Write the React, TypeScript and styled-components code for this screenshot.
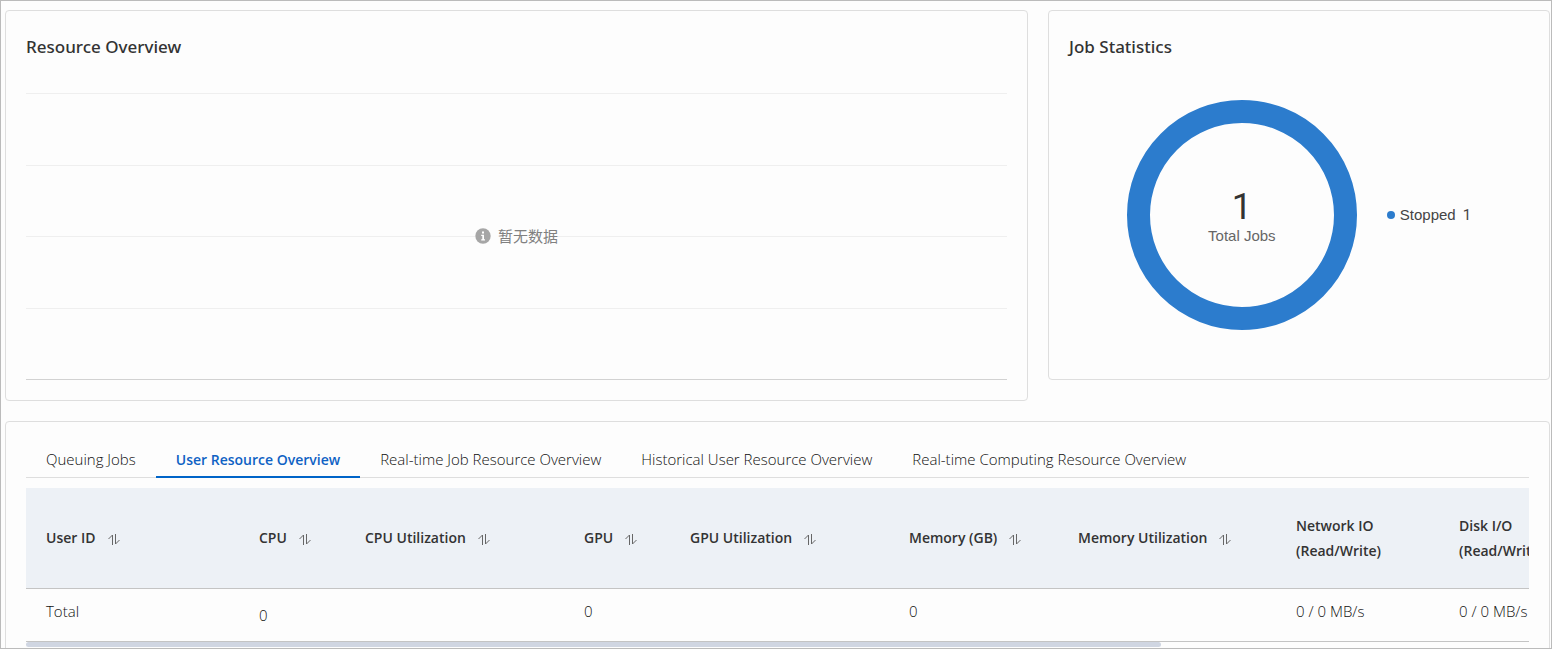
import React, { useRef, useState } from "react";
import styled, { createGlobalStyle } from "styled-components";

const GlobalStyle = createGlobalStyle`
  *, *::before, *::after { box-sizing: border-box; }
  body {
    margin: 0;
    background: #fdfdfd;
    color: #333;
    font-family: "Open Sans", "Noto Sans CJK SC", sans-serif;
    font-size: 15px;
  }
`;

const Page = styled.main`
  height: 100vh;
  overflow: hidden;
  border: 1px solid #bbb;
  padding: 9px 1px 0 4px;
`;

const TopRow = styled.div`
  display: grid;
  grid-template-columns: minmax(0, 1023fr) minmax(0, 502fr);
  gap: 20px;
  align-items: start;
  margin-bottom: 20px;
`;

const Card = styled.section`
  border: 1px solid #dedede;
  border-radius: 4px;
  padding: 20px;
`;

const CardTitle = styled.h2`
  margin: 0;
  font-family: "Noto Sans", sans-serif;
  font-size: 17px;
  font-weight: 500;
  line-height: 32px;
`;

const Plot = styled.div`
  position: relative;
  display: flex;
  flex-direction: column;
  justify-content: space-between;
  height: 287px;
  margin-top: 30px;
`;

const GridLine = styled.div<{ $axis?: boolean }>`
  height: 1px;
  background: ${(p) => (p.$axis ? "#d2d2d2" : "#efefef")};
`;

const EmptyOverlay = styled.div`
  position: absolute;
  inset: 0;
  display: flex;
  align-items: center;
  justify-content: center;
  padding-bottom: 2px;
`;

const EmptyMessage = styled.p`
  display: flex;
  align-items: center;
  gap: 7px;
  margin: 0;
  background: #fdfdfd;
  color: #808080;
  font: 15px/20px "Noto Sans CJK SC", sans-serif;
`;

const ChartArea = styled.div`
  display: flex;
  align-items: center;
  justify-content: center;
  gap: 30px;
  padding: 37px 0 29px;
  font-family: "Liberation Sans", Arial, sans-serif;
  font-size: 15px;
`;

const DonutBox = styled.div`
  display: grid;
  place-items: center;
  > * { grid-area: 1 / 1; }
`;

const DonutLabel = styled.div`
  display: flex;
  flex-direction: column;
  align-items: center;
  padding-top: 4px;
  color: #666;
  line-height: 20px;
`;

const DonutValue = styled.strong`
  color: #333;
  font-family: Roboto, sans-serif;
  font-size: 36px;
  font-weight: 400;
  line-height: 38px;
`;

const Legend = styled.div`
  display: flex;
  align-items: center;
  gap: 5px;
  color: #444;
  line-height: 20px;
`;

const LegendDot = styled.span`
  width: 8px;
  height: 8px;
  border-radius: 50%;
  background: #2c7ccd;
`;

const LegendValue = styled.span`
  padding-left: 2px;
  font-family: Roboto, sans-serif;
`;

const Tabs = styled.div`
  display: flex;
  height: 36px;
  margin-bottom: 10px;
  box-shadow: inset 0 -1px #dedede;
`;

const Tab = styled.button<{ $active: boolean }>`
  padding: 0 20px;
  border: 0;
  border-bottom: 2px solid ${(p) => (p.$active ? "#0064c8" : "transparent")};
  background: none;
  color: ${(p) => (p.$active ? "#0f62c4" : "#111")};
  font: inherit;
  font-size: ${(p) => (p.$active ? 14 : 15)}px;
  font-weight: ${(p) => (p.$active ? 600 : 300)};
  white-space: nowrap;
  cursor: pointer;
`;

const TableViewport = styled.div`
  overflow-x: auto;
  scrollbar-width: none;
`;

const Table = styled.table`
  width: 1990px;
  table-layout: fixed;
  border-collapse: separate;
  border-spacing: 0;
`;

const Col = styled.col<{ $width?: number }>`
  width: ${(p) => (p.$width ? `${p.$width}px` : "auto")};
`;

const HeadCell = styled.th`
  height: 101px;
  padding: 0 20px;
  border-bottom: 1px solid #c4c4c4;
  background: #edf1f6;
  font-size: 14px;
  font-weight: 600;
  line-height: 25px;
  text-align: left;
  white-space: pre-line;
`;

const HeadLabel = styled.div`
  display: flex;
  align-items: center;
  gap: 12px;
  padding-bottom: 2px;
`;

const SortButton = styled.button`
  display: flex;
  padding: 4px 0 0;
  border: 0;
  background: none;
  color: #666;
  cursor: pointer;
`;

const Cell = styled.td<{ $middle?: boolean }>`
  height: 53px;
  padding: 10px 20px;
  border-bottom: 1px solid #c4c4c4;
  color: #111;
  font-weight: 300;
  line-height: 24px;
  vertical-align: ${(p) => (p.$middle ? "middle" : "top")};
`;

const ScrollThumb = styled.div`
  height: 5px;
  border-radius: 3px;
  background: #d0d6e2;
`;

const SortIcon = () => (
  <svg width="12" height="11" viewBox="0 0 12 11" fill="none" stroke="currentColor" aria-hidden="true">
    <path d="M4.5 11V1L0.5 5" />
    <path d="M7.5 0V10L11.5 6" />
  </svg>
);

const InfoIcon = () => (
  <svg width="16" height="16" viewBox="0 0 16 16" aria-hidden="true">
    <circle cx="8" cy="8" r="7.7" fill="#a6a6a6" />
    <path d="M7 3.5h2v2H7zM6.2 6.8H9v4.4h1v1.2H6.2v-1.2h1.1V8H6.2z" fill="#fff" />
  </svg>
);

const tabs = [
  "Queuing Jobs",
  "User Resource Overview",
  "Real-time Job Resource Overview",
  "Historical User Resource Overview",
  "Real-time Computing Resource Overview",
];

type Column = { title: string; width?: number; sortable?: boolean; total: string; middle?: boolean };

const columns: Column[] = [
  { title: "User ID", width: 213, sortable: true, total: "Total" },
  { title: "CPU", width: 106, sortable: true, total: "0", middle: true },
  { title: "CPU Utilization", width: 219, sortable: true, total: "" },
  { title: "GPU", width: 106, sortable: true, total: "0" },
  { title: "GPU Utilization", width: 219, sortable: true, total: "" },
  { title: "Memory (GB)", width: 169, sortable: true, total: "0" },
  { title: "Memory Utilization", width: 218, sortable: true, total: "" },
  { title: "Network IO\n(Read/Write)", width: 163, total: "0 / 0 MB/s" },
  { title: "Disk I/O\n(Read/Write)", total: "0 / 0 MB/s" },
];

const TABLE_WIDTH = 1990;

export default function App() {
  const [active, setActive] = useState(1);
  const [scroll, setScroll] = useState({ left: 0, ratio: 1135 / 1503 });
  const viewport = useRef<HTMLDivElement>(null);

  const onScroll = () => {
    const el = viewport.current;
    if (el) setScroll({ left: el.scrollLeft / TABLE_WIDTH, ratio: el.clientWidth / TABLE_WIDTH });
  };

  return (
    <>
      <GlobalStyle />
      <Page>
        <TopRow>
          <Card>
            <CardTitle>Resource Overview</CardTitle>
            <Plot>
              <GridLine />
              <GridLine />
              <GridLine />
              <GridLine />
              <GridLine $axis />
              <EmptyOverlay>
                <EmptyMessage>
                  <InfoIcon />
                  <span>暂无数据</span>
                </EmptyMessage>
              </EmptyOverlay>
            </Plot>
          </Card>
          <Card>
            <CardTitle>Job Statistics</CardTitle>
            <ChartArea>
              <DonutBox>
                <svg width="230" height="230" viewBox="0 0 230 230" aria-hidden="true">
                  <circle cx="115" cy="115" r="103.5" fill="none" stroke="#2c7ccd" strokeWidth="23" />
                </svg>
                <DonutLabel>
                  <DonutValue>1</DonutValue>
                  <span>Total Jobs</span>
                </DonutLabel>
              </DonutBox>
              <Legend>
                <LegendDot />
                <span>Stopped</span>
                <LegendValue>1</LegendValue>
              </Legend>
            </ChartArea>
          </Card>
        </TopRow>
        <Card>
          <Tabs role="tablist">
            {tabs.map((label, i) => (
              <Tab key={label} role="tab" aria-selected={i === active} $active={i === active} onClick={() => setActive(i)}>
                {label}
              </Tab>
            ))}
          </Tabs>
          <TableViewport ref={viewport} onScroll={onScroll}>
            <Table>
              <colgroup>
                {columns.map((c) => (
                  <Col key={c.title} $width={c.width} />
                ))}
              </colgroup>
              <thead>
                <tr>
                  {columns.map((c) => (
                    <HeadCell key={c.title} scope="col">
                      {c.sortable ? (
                        <HeadLabel>
                          {c.title}
                          <SortButton aria-label={`Sort by ${c.title}`}>
                            <SortIcon />
                          </SortButton>
                        </HeadLabel>
                      ) : (
                        c.title
                      )}
                    </HeadCell>
                  ))}
                </tr>
              </thead>
              <tbody>
                <tr>
                  {columns.map((c) => (
                    <Cell key={c.title} $middle={c.middle}>
                      {c.total}
                    </Cell>
                  ))}
                </tr>
              </tbody>
            </Table>
          </TableViewport>
          <ScrollThumb style={{ width: `${scroll.ratio * 100}%`, marginLeft: `${scroll.left * 100}%` }} />
        </Card>
      </Page>
    </>
  );
}
